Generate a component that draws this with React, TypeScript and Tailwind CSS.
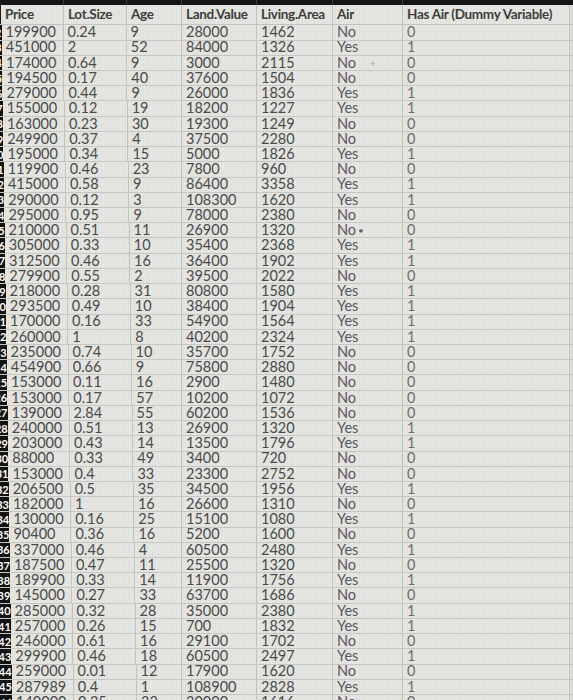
import React from "react";

const rows: string[][] = [
  ["199900", "0.24", "9", "28000", "1462", "No", "0"],
  ["451000", "2", "52", "84000", "1326", "Yes", "1"],
  ["174000", "0.64", "9", "3000", "2115", "No", "0"],
  ["194500", "0.17", "40", "37600", "1504", "No", "0"],
  ["279000", "0.44", "9", "26000", "1836", "Yes", "1"],
  ["155000", "0.12", "19", "18200", "1227", "Yes", "1"],
  ["163000", "0.23", "30", "19300", "1249", "No", "0"],
  ["249900", "0.37", "4", "37500", "2280", "No", "0"],
  ["195000", "0.34", "15", "5000", "1826", "Yes", "1"],
  ["119900", "0.46", "23", "7800", "960", "No", "0"],
  ["415000", "0.58", "9", "86400", "3358", "Yes", "1"],
  ["290000", "0.12", "3", "108300", "1620", "Yes", "1"],
  ["295000", "0.95", "9", "78000", "2380", "No", "0"],
  ["210000", "0.51", "11", "26900", "1320", "No", "0"],
  ["305000", "0.33", "10", "35400", "2368", "Yes", "1"],
  ["312500", "0.46", "16", "36400", "1902", "Yes", "1"],
  ["279900", "0.55", "2", "39500", "2022", "No", "0"],
  ["218000", "0.28", "31", "80800", "1580", "Yes", "1"],
  ["293500", "0.49", "10", "38400", "1904", "Yes", "1"],
  ["170000", "0.16", "33", "54900", "1564", "Yes", "1"],
  ["260000", "1", "8", "40200", "2324", "Yes", "1"],
  ["235000", "0.74", "10", "35700", "1752", "No", "0"],
  ["454900", "0.66", "9", "75800", "2880", "No", "0"],
  ["153000", "0.11", "16", "2900", "1480", "No", "0"],
  ["153000", "0.17", "57", "10200", "1072", "No", "0"],
  ["139000", "2.84", "55", "60200", "1536", "No", "0"],
  ["240000", "0.51", "13", "26900", "1320", "Yes", "1"],
  ["203000", "0.43", "14", "13500", "1796", "Yes", "1"],
  ["88000", "0.33", "49", "3400", "720", "No", "0"],
  ["153000", "0.4", "33", "23300", "2752", "No", "0"],
  ["206500", "0.5", "35", "34500", "1956", "Yes", "1"],
  ["182000", "1", "16", "26600", "1310", "No", "0"],
  ["130000", "0.16", "25", "15100", "1080", "Yes", "1"],
  ["90400", "0.36", "16", "5200", "1600", "No", "0"],
  ["337000", "0.46", "4", "60500", "2480", "Yes", "1"],
  ["187500", "0.47", "11", "25500", "1320", "No", "0"],
  ["189900", "0.33", "14", "11900", "1756", "Yes", "1"],
  ["145000", "0.27", "33", "63700", "1686", "No", "0"],
  ["285000", "0.32", "28", "35000", "2380", "Yes", "1"],
  ["257000", "0.26", "15", "700", "1832", "Yes", "1"],
  ["246000", "0.61", "16", "29100", "1702", "No", "0"],
  ["299900", "0.46", "18", "60500", "2497", "Yes", "1"],
  ["259000", "0.01", "12", "17900", "1620", "No", "0"],
  ["287989", "0.4", "1", "108900", "2828", "Yes", "1"],
  ["140000", "0.25", "33", "30000", "1616", "No", "0"],
];

const cell = "h-full flex items-center pl-[4px] border-r border-[#c2c2be] whitespace-nowrap";

export default function App() {
  return (
    <div
      className="w-[573px] h-[700px] overflow-hidden bg-[#d9d9d5] text-[14.5px] leading-none"
      style={{ fontFamily: "Lato, 'Open Sans', sans-serif" }}
    >
      <div className="h-[5px] bg-[#161616] flex">
        <div className="w-[64px] border-r border-[#3a3a3a]" />
        <div className="w-[63px] border-r border-[#3a3a3a]" />
        <div className="w-[55px] border-r border-[#3a3a3a]" />
        <div className="w-[75px] border-r border-[#3a3a3a]" />
        <div className="w-[76px] border-r border-[#3a3a3a]" />
        <div className="w-[70px] border-r border-[#3a3a3a]" />
        <div className="flex-1" />
      </div>
      <div className="bg-[repeating-linear-gradient(90deg,#e5e5e1_0px,#e5e5e1_2px,#dfdfdb_2px,#dfdfdb_3px)]">
        <div className="h-[20.4px] flex border-b border-[#c2c2be] font-bold text-[#3d3d3d] text-[13.5px] tracking-[-0.3px]">
          <div className="w-[1px] h-full bg-[#1a1a1a]" />
          <div className={`${cell} w-[63px]`}>Price</div>
          <div className={`${cell} w-[63px]`}>Lot.Size</div>
          <div className={`${cell} flex-1`}>Age</div>
          <div className={`${cell} w-[75px]`}>Land.Value</div>
          <div className={`${cell} w-[76px]`}>Living.Area</div>
          <div className={`${cell} w-[70px]`}>Air</div>
          <div className={`${cell} w-[167px] border-[#8f8f8c]`}>Has Air (Dummy Variable)</div>
          <div className="w-[3px] h-full bg-[#dcdcd9]" />
        </div>
        {rows.map((r, i) => {
          const w = 1.5 + i * 0.24;
          return (
            <div key={i} className="h-[15.23px] flex border-b border-[#c6c6c2] text-[#4a4a4a]">
              <div
                className="h-full bg-[#121212] flex items-center justify-end overflow-hidden whitespace-nowrap text-white font-bold text-[11px]"
                style={{ width: `${w}px` }}
              >
                {i + 2}
              </div>
              <div className={`${cell} w-[62px]`}>{r[0]}</div>
              <div className={`${cell} w-[63px]`}>{r[1]}</div>
              <div className={`${cell} flex-1`}>{r[2]}</div>
              <div className={`${cell} w-[75px]`}>{r[3]}</div>
              <div className={`${cell} w-[76px]`}>{r[4]}</div>
              <div className={`${cell} w-[70px] text-[#5d5560]`}>
                {r[5]}
                {i === 2 && <span className="ml-[14px] text-[#b0a9a0] text-[10px]">+</span>}
                {i === 13 && <span className="ml-[2px] text-[#6a6a6a] text-[10px]">•</span>}
              </div>
              <div className={`${cell} w-[167px] text-[#6e6e6e] border-[#8f8f8c]`}>{r[6]}</div>
              <div className="w-[3px] h-full bg-[#dcdcd9]" />
            </div>
          );
        })}
      </div>
    </div>
  );
}
